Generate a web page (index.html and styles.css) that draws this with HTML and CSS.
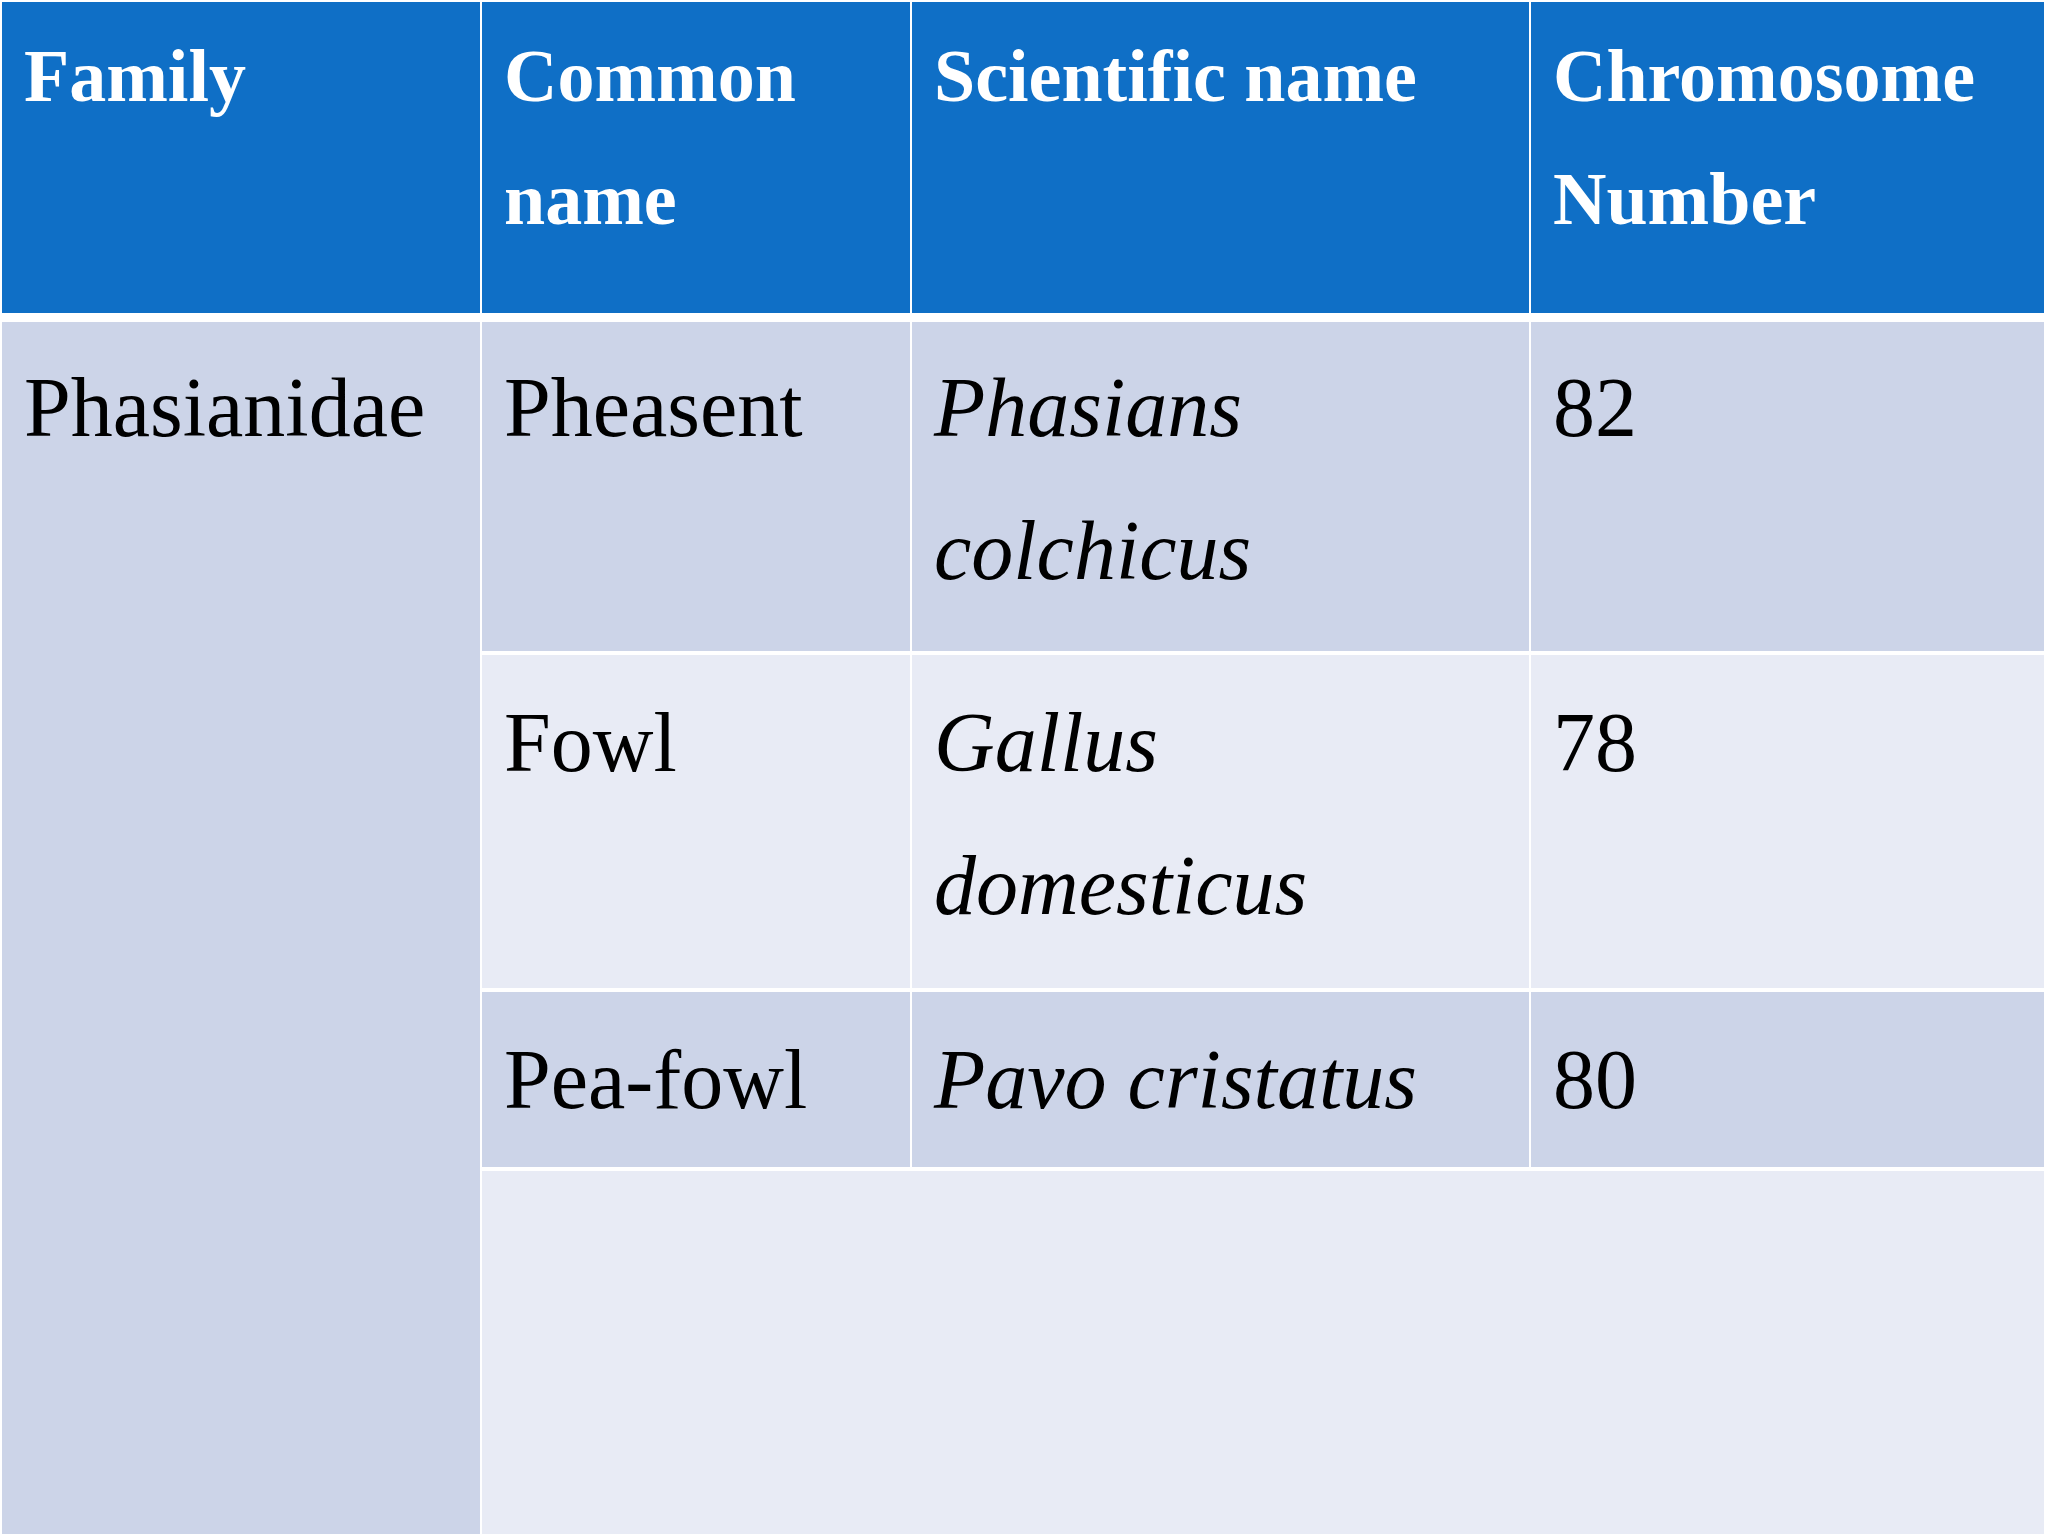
FILE: index.html
```html
<!DOCTYPE html>
<html lang="en">
<head>
<meta charset="utf-8">
<title>Chromosome numbers – Phasianidae</title>
<link rel="stylesheet" href="styles.css">
</head>
<body>
<div class="table">
  <div class="head">
    <div class="hcell">Family</div>
    <div class="hcell">Common name</div>
    <div class="hcell">Scientific name</div>
    <div class="hcell">Chromosome Number</div>
  </div>
  <div class="body">
    <div class="cell dark family">Phasianidae</div>
    <div class="cell dark r1">Pheasent</div>
    <div class="cell dark sci r1">Phasians colchicus</div>
    <div class="cell dark r1">82</div>
    <div class="cell light r2">Fowl</div>
    <div class="cell light sci r2">Gallus domesticus</div>
    <div class="cell light r2">78</div>
    <div class="cell dark r3">Pea-fowl</div>
    <div class="cell dark sci r3">Pavo cristatus</div>
    <div class="cell dark r3">80</div>
    <div class="cell light empty"></div>
  </div>
</div>
</body>
</html>
```
FILE: styles.css
```css
html, body {
  margin: 0;
  padding: 0;
  background: #ffffff;
}
body {
  width: 2048px;
  height: 1536px;
  overflow: hidden;
  font-family: "Liberation Serif", "Times New Roman", serif;
}
.table {
  padding: 2px 2px 0 2px;
  display: flex;
  flex-direction: column;
  gap: 9px;
}
.head,
.body {
  display: grid;
  grid-template-columns: 478px 428px 617px 513px;
  column-gap: 2px;
}
.head {
  grid-template-rows: 311px;
}
.hcell {
  background: #0f6fc6;
  color: #ffffff;
  font-weight: bold;
  font-size: 74px;
  line-height: 123px;
  padding: 13px 22px 0 22px;
  box-sizing: border-box;
}
.body {
  grid-template-rows: 329px 333px 175px 363px;
  row-gap: 4px;
}
.cell {
  font-size: 84px;
  line-height: 143px;
  color: #000000;
  padding: 16px 22px 0 22px;
  box-sizing: border-box;
  font-variant-numeric: oldstyle-nums;
}
.dark { background: #ccd4e8; }
.light { background: #e8ebf5; }
.sci { font-style: italic; }
.family {
  grid-column: 1;
  grid-row: 1 / 5;
  padding-top: 14px;
}
.r1 { grid-row: 1; padding-top: 14px; }
.r2 { grid-row: 2; }
.r3 { grid-row: 3; }
.empty {
  grid-column: 2 / 5;
  grid-row: 4;
}
```
